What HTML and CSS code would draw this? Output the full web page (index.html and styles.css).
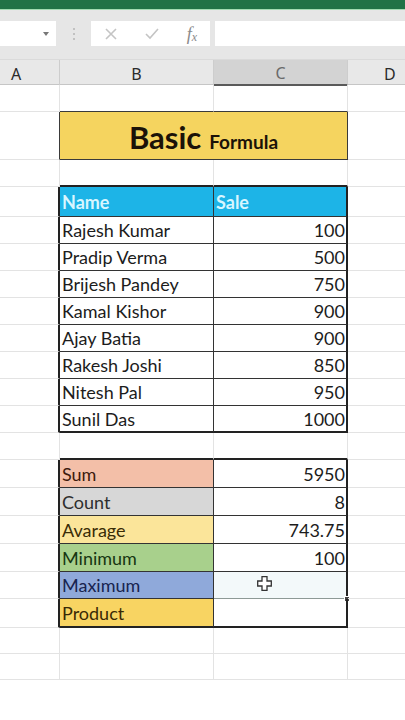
FILE: index.html
```html
<!DOCTYPE html>
<html>
<head>
<meta charset="utf-8">
<link rel="stylesheet" href="styles.css">
</head>
<body>
<div class="app">
  <div class="titlebar"></div>
  <div class="toolbar">
    <div class="namebox"><span class="caret"></span></div>
    <div class="grip"><i></i><i></i><i></i></div>
    <div class="fbtns">
      <svg class="ico" width="14" height="14" viewBox="0 0 14 14"><path d="M2 2 L12 12 M12 2 L2 12" stroke="#c4c4c4" stroke-width="1.6" fill="none"/></svg>
      <svg class="ico" width="16" height="14" viewBox="0 0 16 14"><path d="M2 7 L6 11 L14 2" stroke="#c4c4c4" stroke-width="1.6" fill="none"/></svg>
      <span class="fx"><i>f</i><sub>x</sub></span>
    </div>
    <div class="finput"></div>
  </div>
  <div class="colheads">
    <div class="ch cha">A</div>
    <div class="ch">B</div>
    <div class="ch sel">C</div>
    <div class="ch chd">D</div>
  </div>
  <div class="sheet">
    <div class="row h27"><div class="c"></div><div class="c btop1"></div><div class="c btop1"></div><div class="c"></div></div>
    <div class="row h48"><div class="c bl1"></div><div class="c title"><span class="big">Basic</span> <span class="small">Formula</span></div><div class="c"></div></div>
    <div class="row h27"><div class="c"></div><div class="c btop"></div><div class="c btop"></div><div class="c"></div></div>

    <div class="row h30"><div class="c bl"></div><div class="c t hd">Name</div><div class="c t hd tr">Sale</div><div class="c"></div></div>
    <div class="row h27"><div class="c bl"></div><div class="c t">Rajesh Kumar</div><div class="c t tr num">100</div><div class="c"></div></div>
    <div class="row h27"><div class="c bl"></div><div class="c t">Pradip Verma</div><div class="c t tr num">500</div><div class="c"></div></div>
    <div class="row h27"><div class="c bl"></div><div class="c t">Brijesh Pandey</div><div class="c t tr num">750</div><div class="c"></div></div>
    <div class="row h27"><div class="c bl"></div><div class="c t">Kamal Kishor</div><div class="c t tr num">900</div><div class="c"></div></div>
    <div class="row h27"><div class="c bl"></div><div class="c t">Ajay Batia</div><div class="c t tr num">900</div><div class="c"></div></div>
    <div class="row h27"><div class="c bl"></div><div class="c t">Rakesh Joshi</div><div class="c t tr num">850</div><div class="c"></div></div>
    <div class="row h27"><div class="c bl"></div><div class="c t">Nitesh Pal</div><div class="c t tr num">950</div><div class="c"></div></div>
    <div class="row h27"><div class="c bl"></div><div class="c t last">Sunil Das</div><div class="c t tr num last">1000</div><div class="c"></div></div>

    <div class="row h27"><div class="c"></div><div class="c btop"></div><div class="c btop"></div><div class="c"></div></div>

    <div class="row h28"><div class="c bl"></div><div class="c t sum">Sum</div><div class="c t tr num">5950</div><div class="c"></div></div>
    <div class="row h28"><div class="c bl"></div><div class="c t cnt">Count</div><div class="c t tr num">8</div><div class="c"></div></div>
    <div class="row h28"><div class="c bl"></div><div class="c t avg">Avarage</div><div class="c t tr num">743.75</div><div class="c"></div></div>
    <div class="row h28"><div class="c bl"></div><div class="c t min">Minimum</div><div class="c t tr num">100</div><div class="c"></div></div>
    <div class="row h27"><div class="c bl"></div><div class="c t max">Maximum</div><div class="c t tr num selcell"><span class="handle"></span>
      <svg class="cursor" width="15" height="15" viewBox="0 0 15 15"><path d="M5 0.7 H10 V5 H14.3 V10 H10 V14.3 H5 V10 H0.7 V5 H5 Z" fill="#fff" stroke="#333" stroke-width="1.3"/></svg></div><div class="c"></div></div>
    <div class="row h29"><div class="c bl"></div><div class="c t prod last">Product</div><div class="c t tr num last"></div><div class="c"></div></div>

    <div class="row h26"><div class="c"></div><div class="c"></div><div class="c"></div><div class="c"></div></div>
    <div class="row h26"><div class="c"></div><div class="c"></div><div class="c"></div><div class="c"></div></div>
  </div>
</div>
</body>
</html>
```

FILE: styles.css
```css
* { box-sizing: border-box; }
html, body { margin: 0; padding: 0; background: #fff; }
body { font-family: Lato, "Open Sans", sans-serif; width: 405px; overflow: hidden; }

.titlebar { height: 10px; background: #217346; border-bottom: 1px solid #a3dcb2; }

.toolbar {
  height: 50px;
  background: #e6e6e6;
  display: flex;
  align-items: flex-start;
  padding-top: 11px;
  border-bottom: 1px solid #dadada;
}
.namebox { width: 56px; height: 25px; background: #fff; position: relative; }
.caret {
  position: absolute; right: 7px; top: 11px;
  width: 0; height: 0;
  border-left: 3.5px solid transparent; border-right: 3.5px solid transparent;
  border-top: 4px solid #777;
}
.grip { width: 35px; height: 25px; display: flex; flex-direction: column; align-items: center; justify-content: center; gap: 3px; }
.grip i { display: block; width: 2px; height: 2px; background: #b5b5b5; border-radius: 1px; }
.fbtns {
  width: 119px; height: 25px; background: #fff;
  display: flex; align-items: center; justify-content: space-between;
  padding: 0 13px 0 13px;
  margin-right: 5px;
}
.fx { font-family: "Liberation Serif", serif; color: #8a8a8a; font-size: 18px; line-height: 1; }
.fx i { font-style: italic; }
.fx sub { font-size: 12px; font-style: italic; vertical-align: -1px; }
.finput { flex: 1; height: 25px; background: #fff; }

.colheads {
  display: grid;
  grid-template-columns: 60px 154px 134px 1fr;
  height: 25px;
  background: #e8e8e8;
  border-bottom: 1px solid #c6c6c6;
}
.ch {
  border-right: 1px solid #cdcdcd;
  font-family: "Noto Sans", sans-serif;
  font-size: 16px;
  color: #2b2b2b;
  display: flex; align-items: center; justify-content: center;
  padding-top: 2px;
}
.ch.cha { justify-content: flex-start; padding-left: 11px; }
.ch.chd { justify-content: flex-start; padding-left: 36px; }
.ch:last-child { border-right: none; }
.ch.sel { background: #d3d3d3; color: #6a6a6a; border-bottom: 2px solid #5a5a5a; }

.row { display: grid; grid-template-columns: 60px 154px 134px 1fr; }
.h26 { height: 26px; } .h27 { height: 27px; } .h28 { height: 28px; } .h29 { height: 29px; }
.h30 { height: 30px; } .h48 { height: 48px; }

.c { border-right: 1px solid #e3e3e3; border-bottom: 1px solid #e3e3e3; position: relative; }
.c:last-child { border-right: none; }

.btop1 { border-bottom: 1px solid #3a3a3a; }
.btop { border-bottom: 2px solid #222; }
.bl1 { border-right: 1px solid #3a3a3a; }
.bl { border-right: 2px solid #222; }

.title {
  grid-column: span 2;
  background: #f5d45f;
  border-right: 1px solid #3a3a3a;
  border-bottom: 1px solid #3a3a3a;
  display: flex; align-items: baseline; justify-content: center;
  padding-top: 6px;
  color: #1b1208;
  font-weight: 700;
}
.title .big { font-size: 31px; }
.title .small { font-size: 19px; margin-left: 8px; }

.t {
  border-right: 1px solid #333;
  border-bottom: 1px solid #333;
  font-size: 18px;
  color: #1c1c1c;
  display: flex; align-items: center;
  padding-left: 2px;
  white-space: nowrap;
}
.t.tr { border-right: 2px solid #222; }
.t.num { justify-content: flex-end; padding-right: 1px; padding-left: 0; }
.t.last { border-bottom: 2px solid #222; }

.hd { background: #1db4e7; color: #d8f6ff; font-weight: 700; }

.sum { background: #f3bfa8; color: #3d1b0e; }
.cnt { background: #d7d7d7; color: #2e2e2e; }
.avg { background: #fbe59a; color: #3a2c06; }
.min { background: #a8d08c; color: #173612; }
.max { background: #8fa9da; color: #18244f; }
.prod { background: #f8d462; color: #3a2905; }

.selcell { background: #f3f9fa; border-bottom: 1px solid #8d9a96; }
.handle {
  position: absolute; right: -4px; bottom: -4px;
  width: 6px; height: 6px; background: #444; border: 1px solid #fff;
}
.cursor { position: absolute; left: 43px; top: 4px; }
```
